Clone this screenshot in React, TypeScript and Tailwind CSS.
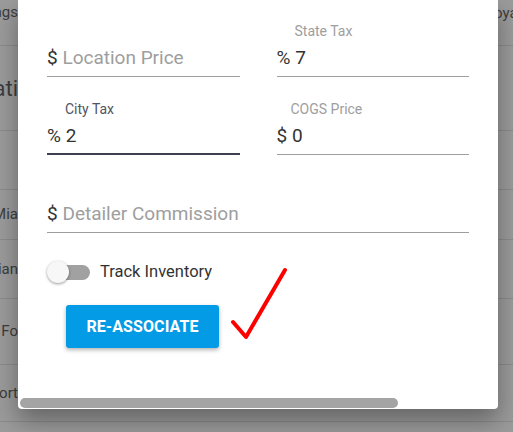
import React from "react";

function Field({
  label,
  labelPad = "pl-[18px]",
  prefix,
  value,
  placeholder,
  focused,
}: {
  label?: string;
  labelPad?: string;
  prefix: string;
  value?: string;
  placeholder?: string;
  focused?: boolean;
}) {
  return (
    <div className="flex flex-col">
      <div
        className={`h-[16px] leading-[16px] text-[14px] ${labelPad} ${
          focused ? "text-[#4f5563]" : "text-[#9e9e9e]"
        }`}
      >
        {label}
      </div>
      <div
        className={`mt-[4px] h-[30px] leading-[30px] text-[19px] whitespace-nowrap ${
          focused ? "mb-[2px]" : "mb-[3px]"
        }`}
      >
        <span className="text-[#333]">{prefix} </span>
        {value ? (
          <span className="text-[#333]">{value}</span>
        ) : (
          <span className="text-[#9e9e9e]">{placeholder}</span>
        )}
      </div>
      <div className={focused ? "h-[2px] bg-[#3d414f]" : "h-px bg-[#9e9e9e]"} />
    </div>
  );
}

function BgRow({ h, left, right, big }: { h: string; left?: string; right?: string; big?: boolean }) {
  return (
    <div className={`${h} flex items-center border-b border-[#8b8b8b]`}>
      <div className="w-[18px] overflow-hidden flex justify-end">
        <span className={`whitespace-nowrap text-[#3d3d3d] ${big ? "text-[22px]" : "text-[15px]"}`}>{left}</span>
      </div>
      <div className="w-[479px]" />
      <div className="flex-1 overflow-hidden">
        <span className="whitespace-nowrap text-[#3d3d3d] text-[15px] ml-[-3px]">{right}</span>
      </div>
    </div>
  );
}

export default function App() {
  return (
    <div
      className="relative w-[513px] h-[432px] overflow-hidden bg-[#9b9b9b]"
      style={{ fontFamily: "Roboto, 'Noto Sans', sans-serif" }}
    >
      {/* dimmed page behind the modal */}
      <div className="flex flex-col">
        <div className="h-[46px] flex items-start pt-[1px] border-b border-[#8b8b8b]">
          <div className="w-[18px] overflow-hidden flex justify-end">
            <span className="whitespace-nowrap text-[#3d3d3d] text-[15px]">ngs</span>
          </div>
          <div className="w-[479px]" />
          <div className="flex-1 overflow-hidden">
            <span className="whitespace-nowrap text-[#3d3d3d] text-[15px] ml-[-3px]">oyalty</span>
          </div>
        </div>
        <BgRow h="h-[85px]" left="ati" big />
        <BgRow h="h-[59px]" />
        <BgRow h="h-[50px]" left="Mia" />
        <BgRow h="h-[59px]" left="Mian" />
        <BgRow h="h-[66px]" left=", Fo" />
        <BgRow h="h-[57px]" left="ort" />
      </div>

      {/* modal */}
      <div className="absolute left-[18px] top-0 w-[480px] h-[409px] bg-white rounded-b-[4px] shadow-[0_12px_24px_rgba(0,0,0,0.35)] flex flex-col">
        <div className="flex-1 px-[29px] pt-[23px]">
          <div className="grid grid-cols-2 gap-x-[37px]">
            <Field prefix="$" placeholder="Location Price" />
            <Field label="State Tax" prefix="%" value="7" />
          </div>
          <div className="grid grid-cols-2 gap-x-[37px] mt-[24px]">
            <Field label="City Tax" prefix="%" value="2" focused />
            <Field label="COGS Price" labelPad="pl-[14px]" prefix="$" value="0" />
          </div>
          <div className="mt-[24px]">
            <Field prefix="$" placeholder="Detailer Commission" />
          </div>

          <div className="mt-[27px] flex items-center h-[24px]">
            <div className="relative w-[43px] h-[22px]">
              <div className="absolute left-[7px] top-[4px] w-[36px] h-[15px] rounded-full bg-[#a1a1a1]" />
              <div className="absolute left-0 top-0 w-[22px] h-[22px] rounded-full bg-[#f7f7f7] shadow-[0_1px_3px_rgba(0,0,0,0.4)]" />
            </div>
            <span className="ml-[10px] text-[16.5px] text-[#333]">Track Inventory</span>
          </div>

          <div className="relative mt-[21px] ml-[19px]">
            <button className="w-[153px] h-[43px] rounded-[3px] bg-[#039be5] text-white font-bold text-[16px] tracking-[0.1px] shadow-[0_2px_4px_rgba(0,0,0,0.3)]">
              RE-ASSOCIATE
            </button>
            <svg
              className="absolute left-[164px] top-[-40px]"
              width="64"
              height="80"
              viewBox="0 0 64 80"
              fill="none"
            >
              <path
                d="M3 57 L16 72 L55 5"
                stroke="#ff0000"
                strokeWidth="4"
                strokeLinecap="round"
                strokeLinejoin="round"
              />
            </svg>
          </div>
        </div>
        <div className="h-[11px] px-[2px] pb-[1px]">
          <div className="w-[378px] h-[10px] rounded-full bg-[#a4a4a4]" />
        </div>
      </div>
    </div>
  );
}
